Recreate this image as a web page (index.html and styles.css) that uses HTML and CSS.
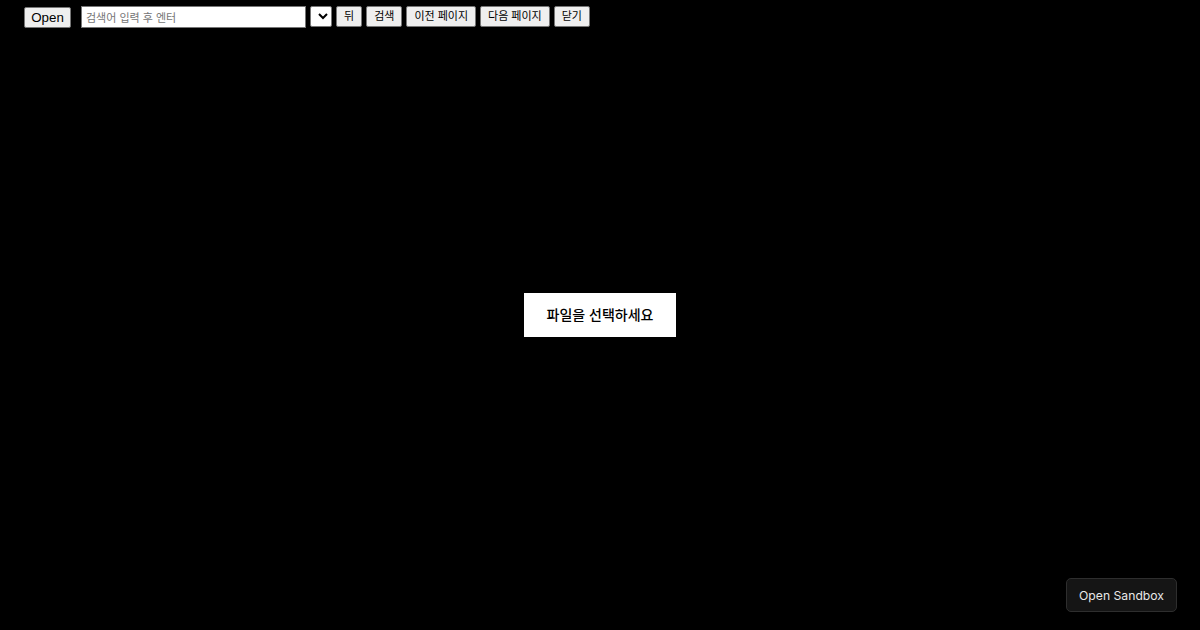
FILE: index.html
```html
<!DOCTYPE html>
<html lang="ko">
<head>
<meta charset="utf-8">
<title>Viewer</title>
<link rel="stylesheet" href="styles.css">
</head>
<body>
<div class="toolbar">
  <button class="btn btn-open">Open</button>
  <input class="search" type="text" placeholder="검색어 입력 후 엔터">
  <select class="mode"><option></option></select>
  <button class="btn btn-ko">뒤</button>
  <button class="btn btn-ko">검색</button>
  <button class="btn btn-ko">이전 페이지</button>
  <button class="btn btn-ko">다음 페이지</button>
  <button class="btn btn-ko">닫기</button>
</div>
<main class="stage">
  <div class="empty">파일을 선택하세요</div>
</main>
<a class="sandbox" href="#">Open Sandbox</a>
</body>
</html>
```

FILE: styles.css
```css
html, body {
  margin: 0;
  padding: 0;
  background: #000;
  height: 100%;
}

body {
  font-family: "Liberation Sans", "Noto Sans CJK KR", sans-serif;
}

.toolbar {
  position: absolute;
  top: 6px;
  left: 24px;
  display: flex;
  align-items: flex-start;
  gap: 4px;
}

.btn {
  box-sizing: border-box;
  height: 21px;
  margin: 0;
  padding: 0 6px;
  font-family: "Liberation Sans", "Noto Sans CJK KR", sans-serif;
  font-size: 13.333px;
  line-height: 15px;
  color: #000;
  background: #efefef;
  border: 1px solid #767676;
  border-radius: 2px;
}

.btn-open {
  width: 47px;
  margin-top: 1px;
  margin-right: 6px;
}

.btn-ko {
  font-size: 11px;
  padding: 0 7px;
}

.search {
  box-sizing: border-box;
  width: 225px;
  height: 22px;
  margin: 0;
  padding: 1px 4px;
  font-family: "Liberation Sans", "Noto Sans CJK KR", sans-serif;
  font-size: 13.333px;
  background: #fff;
  border: 1px solid #767676;
  border-radius: 0;
}

.search::placeholder {
  color: #757575;
  font-size: 11px;
}

.mode {
  box-sizing: border-box;
  width: 22px;
  height: 21px;
  margin: 0;
  padding: 0;
  background: #fff;
  border: 1px solid #767676;
  border-radius: 2px;
}

.stage {
  height: 100vh;
  display: grid;
  place-items: center;
}

.empty {
  background: #fff;
  color: #000;
  font-size: 14px;
  line-height: 16px;
  padding: 14px 23px;
  font-weight: 500;
}

.sandbox {
  position: fixed;
  right: 23px;
  bottom: 18px;
  box-sizing: border-box;
  height: 34px;
  padding: 0 12px;
  display: flex;
  align-items: center;
  background: #151515;
  border: 1px solid #2e2e2e;
  border-radius: 5px;
  color: #e8e8e8;
  font-family: Inter, "Liberation Sans", sans-serif;
  font-size: 12.2px;
  text-decoration: none;
}
```
